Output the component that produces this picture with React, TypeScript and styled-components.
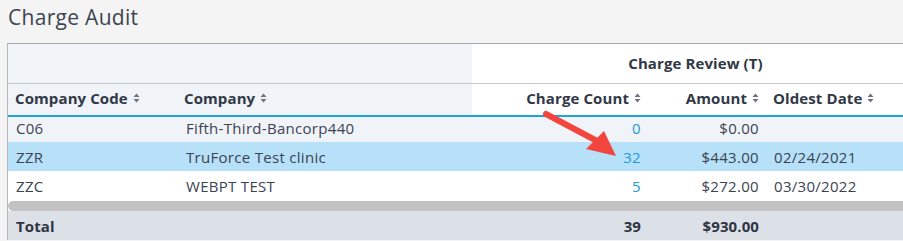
import React from "react";
import styled, { createGlobalStyle } from "styled-components";

const GlobalStyle = createGlobalStyle`
  html, body {
    margin: 0;
    padding: 0;
    overflow: hidden;
    background: #f4f4f4;
  }
  body {
    font-family: "Open Sans", Lato, sans-serif;
    color: #3b4352;
  }
`;

const Page = styled.div`
  position: relative;
  width: 903px;
  height: 241px;
  overflow: hidden;
`;

const Title = styled.h1`
  margin: 0;
  height: 43px;
  padding: 4px 0 0 8px;
  box-sizing: border-box;
  font-size: 21px;
  font-weight: 400;
  letter-spacing: 0.3px;
  color: #3d4451;
  line-height: 26px;
`;

const TableFrame = styled.div`
  margin-left: 7px;
  width: 960px;
  border-left: 1px solid #b4b9c0;
  border-top: 1px solid #a4aab2;
  background: #fff;
`;

const Grid = styled.table`
  border-collapse: collapse;
  table-layout: fixed;
  width: 911px;
  font-size: 15px;
  line-height: 18px;
`;

const GroupRow = styled.tr`
  height: 39px;
  border-bottom: 1px solid #c6cad0;
`;

const HeadRow = styled.tr`
  height: 33px;
  border-bottom: 2px solid #1ea3dc;
  & > th {
    padding-bottom: 2px;
  }
`;

const HeadCell = styled.th<{ $align?: "left" | "right" | "center"; $pinned?: boolean }>`
  padding: 0 7px;
  text-align: ${(p) => p.$align ?? "left"};
  font-weight: 700;
  letter-spacing: 0.1px;
  color: #313846;
  white-space: nowrap;
  background: ${(p) => (p.$pinned ? "#f0f3f8" : "#fff")};
`;

const BodyRow = styled.tr<{ $tone: "plain" | "muted" | "active" }>`
  height: 29px;
  background: ${(p) =>
    p.$tone === "active" ? "#b6e1f8" : p.$tone === "muted" ? "#f0f3f8" : "#fff"};
  &:first-child {
    height: 26px;
  }
  &:first-child > td {
    padding-bottom: 3px;
  }
`;

const Cell = styled.td<{ $align?: "left" | "right"; $link?: boolean; $indent?: number }>`
  padding: 0 7px 0 ${(p) => p.$indent ?? 8}px;
  text-align: ${(p) => p.$align ?? "left"};
  letter-spacing: 0.3px;
  color: ${(p) => (p.$link ? "#1b9cd8" : "#3b4352")};
  white-space: nowrap;
`;

const ScrollGap = styled.div`
  height: 1px;
  background: #fff;
`;

const ScrollBar = styled.div`
  height: 10px;
  background: #c2c2c2;
  border-radius: 5px 0 0 5px;
`;

const TotalRow = styled.tr`
  height: 29px;
  background: #dce1e8;
`;

const TotalCell = styled.td<{ $align?: "left" | "right" }>`
  padding: 0 7px 0 8px;
  text-align: ${(p) => p.$align ?? "left"};
  font-weight: 700;
  letter-spacing: 0.1px;
  color: #2f3542;
`;

const SortLabel = styled.span`
  display: inline-flex;
  align-items: center;
  gap: 5px;
`;

const Arrow = styled.svg`
  position: absolute;
  left: 0;
  top: 0;
  pointer-events: none;
`;

const SortIcon = () => (
  <svg width="7" height="10" viewBox="0 0 7 10">
    <path d="M3.5 0.5 L6.5 4 L0.5 4 Z" fill="#6b7280" />
    <path d="M3.5 9.5 L6.5 6 L0.5 6 Z" fill="#6b7280" />
  </svg>
);

const Sortable = ({ children }: { children: React.ReactNode }) => (
  <SortLabel>
    {children}
    <SortIcon />
  </SortLabel>
);

type Row = {
  code: string;
  company: string;
  count: number;
  amount: string;
  oldest: string;
  tone: "plain" | "muted" | "active";
};

const rows: Row[] = [
  { code: "C06", company: "Fifth-Third-Bancorp440", count: 0, amount: "$0.00", oldest: "", tone: "muted" },
  { code: "ZZR", company: "TruForce Test clinic", count: 32, amount: "$443.00", oldest: "02/24/2021", tone: "active" },
  { code: "ZZC", company: "WEBPT TEST", count: 5, amount: "$272.00", oldest: "03/30/2022", tone: "plain" },
];

const Columns = () => (
  <colgroup>
    <col style={{ width: 169 }} />
    <col style={{ width: 295 }} />
    <col style={{ width: 176 }} />
    <col style={{ width: 118 }} />
    <col style={{ width: 153 }} />
  </colgroup>
);

export default function App() {
  return (
    <Page>
      <GlobalStyle />
      <Title>Charge Audit</Title>
      <TableFrame>
        <Grid>
          <Columns />
          <thead>
            <GroupRow>
              <HeadCell colSpan={2} $pinned />
              <HeadCell colSpan={3} $align="center">
                Charge Review (T)
              </HeadCell>
            </GroupRow>
            <HeadRow>
              <HeadCell $pinned>
                <Sortable>Company Code</Sortable>
              </HeadCell>
              <HeadCell $pinned>
                <Sortable>Company</Sortable>
              </HeadCell>
              <HeadCell $align="right">
                <Sortable>Charge Count</Sortable>
              </HeadCell>
              <HeadCell $align="right">
                <Sortable>Amount</Sortable>
              </HeadCell>
              <HeadCell>
                <Sortable>Oldest Date</Sortable>
              </HeadCell>
            </HeadRow>
          </thead>
          <tbody>
            {rows.map((r) => (
              <BodyRow key={r.code} $tone={r.tone}>
                <Cell>{r.code}</Cell>
                <Cell $indent={9}>{r.company}</Cell>
                <Cell $align="right" $link>
                  {r.count}
                </Cell>
                <Cell $align="right">{r.amount}</Cell>
                <Cell>{r.oldest}</Cell>
              </BodyRow>
            ))}
          </tbody>
        </Grid>
        <ScrollGap />
        <ScrollBar />
        <Grid>
          <Columns />
          <tbody>
            <TotalRow>
              <TotalCell>Total</TotalCell>
              <TotalCell />
              <TotalCell $align="right">39</TotalCell>
              <TotalCell $align="right">$930.00</TotalCell>
              <TotalCell />
            </TotalRow>
          </tbody>
        </Grid>
      </TableFrame>
      <Arrow width="903" height="241" viewBox="0 0 903 241">
        <line x1="546" y1="114" x2="597" y2="141" stroke="#f2453d" strokeWidth="6" strokeLinecap="round" />
        <path d="M616 156 L586 149 L604 131 Z" fill="#f2453d" />
      </Arrow>
    </Page>
  );
}
